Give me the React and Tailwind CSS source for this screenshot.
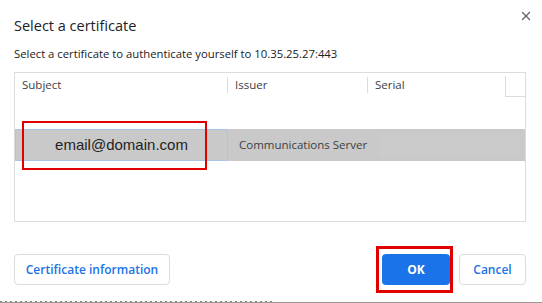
import { X } from 'lucide-react';

const App = () => {
    return (
        <div className="relative w-[542px] h-[303px] bg-white text-[#202124] font-['Open_Sans','Noto_Sans',sans-serif] overflow-hidden">
            <div className="flex flex-col h-full px-[14px]">
                {/* Title */}
                <div className="flex items-start justify-between pt-[16px]">
                    <h1 className="text-[14.5px] leading-[20px] text-[#202124]">Select a certificate</h1>
                    <button className="-mt-[7px] -mr-[5px] text-[#5f6368]">
                        <X size={14} strokeWidth={2.2} />
                    </button>
                </div>
                <p className="mt-[10px] text-[11.3px] leading-[16px] text-[#202124]">
                    Select a certificate to authenticate yourself to 10.35.25.27:443
                </p>

                {/* Table */}
                <div className="mt-[10px] h-[150px] w-[512px] border border-[#dadce0] flex flex-col">
                    <div className="flex h-[24px] text-[11.5px] text-[#3c4043]">
                        <div className="w-[212px] flex items-center pl-[7px]">Subject</div>
                        <div className="w-[140px] flex items-center pl-[7px] border-l border-[#dadce0] my-[4px]">Issuer</div>
                        <div className="w-[138px] flex items-center pl-[7px] border-l border-[#dadce0] my-[4px]">Serial</div>
                        <div className="flex-1 border-l border-b border-[#dadce0] mt-[3px]"></div>
                    </div>
                    <div className="h-[32px]"></div>
                    <div className="flex h-[32px] bg-[#c9c9c9]">
                        <div className="w-[213px] flex items-center justify-center border border-[#a9c4e6] rounded-[2px] font-['Liberation_Sans',Arial,sans-serif] text-[15px] text-[#1f1f1f]">
                            email@domain.com
                        </div>
                        <div className="w-[151px] flex items-center pl-[11px] text-[11.5px] text-[#3c4043]">
                            Communications Server
                        </div>
                        <div className="flex-1 flex items-center py-[4px] pr-[6px]">
                            <div className="w-full h-full bg-[#cbcbcb]"></div>
                        </div>
                    </div>
                </div>

                {/* Buttons */}
                <div className="mt-[32px] flex items-center justify-between w-[512px]">
                    <button className="w-[156px] h-[31px] border border-[#dadce0] rounded-[4px] text-[12px] font-semibold text-[#1a73e8]">
                        Certificate information
                    </button>
                    <div className="flex gap-[9px]">
                        <button className="w-[68px] h-[31px] rounded-[4px] bg-[#1a73e8] text-white text-[12px] font-bold">
                            OK
                        </button>
                        <button className="w-[67px] h-[31px] border border-[#dadce0] rounded-[4px] text-[12px] font-semibold text-[#1a73e8]">
                            Cancel
                        </button>
                    </div>
                </div>
            </div>

            {/* Bottom edge of page behind */}
            <div className="absolute left-0 bottom-0 w-full h-[2px] border-b border-[#9a9a9a]">
                <div className="w-[275px] h-[1px] bg-[repeating-linear-gradient(90deg,#444_0_2px,transparent_2px_5px)] opacity-70"></div>
            </div>

            {/* Red annotation boxes */}
            <div className="absolute left-[22px] top-[121px] w-[185px] h-[49px] border-2 border-[#e00000]"></div>
            <div className="absolute left-[376px] top-[246px] w-[77px] h-[47px] border-[3px] border-[#e00000]"></div>
        </div>
    );
};

export default App;
